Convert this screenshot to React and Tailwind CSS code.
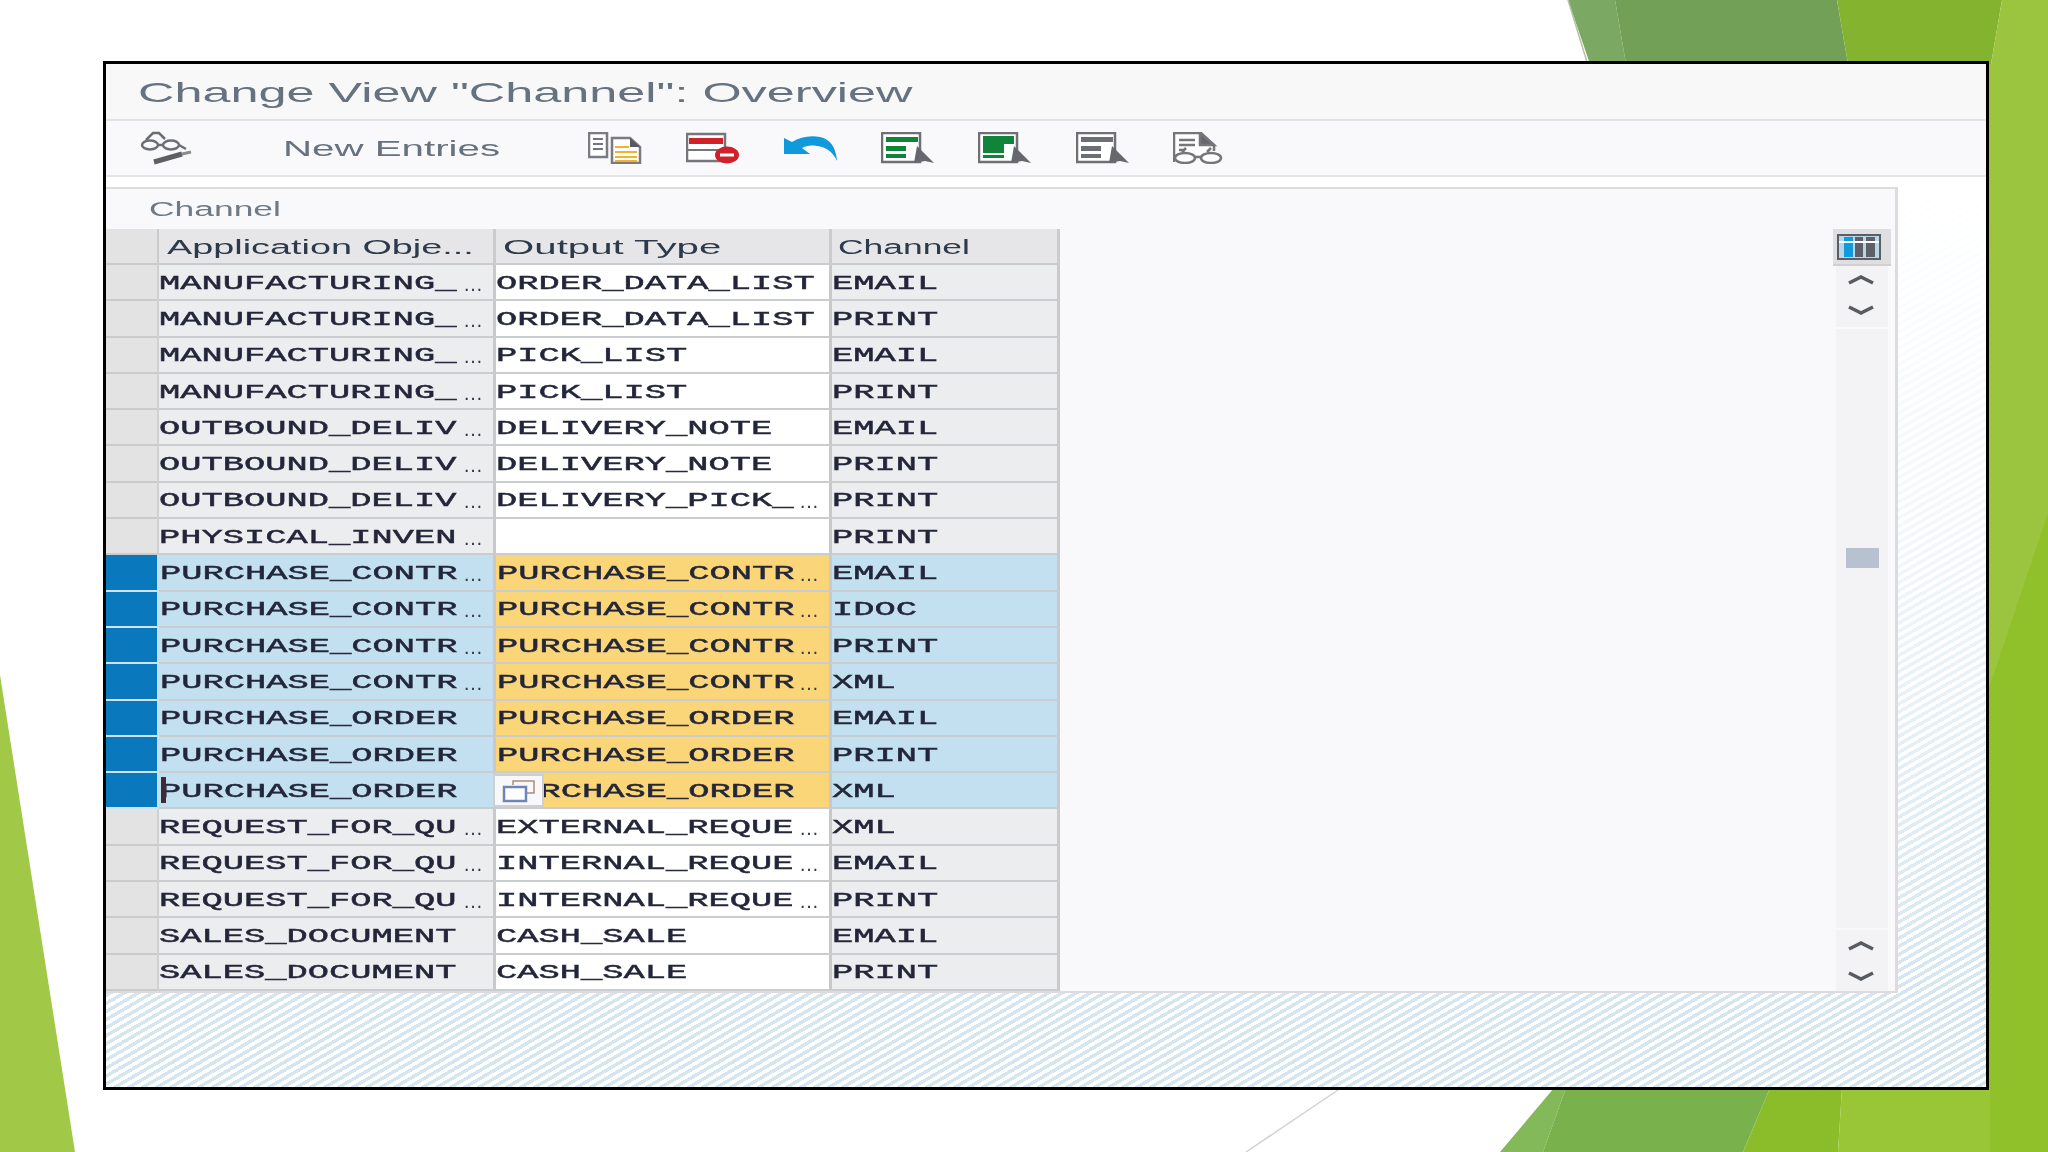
const rows = [
  ["MANUFACTURING_", true, "ORDER_DATA_LIST", false, "EMAIL"],
  ["MANUFACTURING_", true, "ORDER_DATA_LIST", false, "PRINT"],
  ["MANUFACTURING_", true, "PICK_LIST", false, "EMAIL"],
  ["MANUFACTURING_", true, "PICK_LIST", false, "PRINT"],
  ["OUTBOUND_DELIV", true, "DELIVERY_NOTE", false, "EMAIL"],
  ["OUTBOUND_DELIV", true, "DELIVERY_NOTE", false, "PRINT"],
  ["OUTBOUND_DELIV", true, "DELIVERY_PICK_", true, "PRINT"],
  ["PHYSICAL_INVEN", true, "", false, "PRINT"],
  ["PURCHASE_CONTR", true, "PURCHASE_CONTR", true, "EMAIL", "sel"],
  ["PURCHASE_CONTR", true, "PURCHASE_CONTR", true, "IDOC", "sel"],
  ["PURCHASE_CONTR", true, "PURCHASE_CONTR", true, "PRINT", "sel"],
  ["PURCHASE_CONTR", true, "PURCHASE_CONTR", true, "XML", "sel"],
  ["PURCHASE_ORDER", false, "PURCHASE_ORDER", false, "EMAIL", "sel"],
  ["PURCHASE_ORDER", false, "PURCHASE_ORDER", false, "PRINT", "sel"],
  ["PURCHASE_ORDER", false, "PURCHASE_ORDER", false, "XML", "focus"],
  ["REQUEST_FOR_QU", true, "EXTERNAL_REQUE", true, "XML"],
  ["REQUEST_FOR_QU", true, "INTERNAL_REQUE", true, "EMAIL"],
  ["REQUEST_FOR_QU", true, "INTERNAL_REQUE", true, "PRINT"],
  ["SALES_DOCUMENT", false, "CASH_SALE", false, "EMAIL"],
  ["SALES_DOCUMENT", false, "CASH_SALE", false, "PRINT"],
];

// The source screenshot is stretched sideways, so all text gets a horizontal scale
function Wide({ className = "scale-x-[1.77]", children }) {
  return (
    <span className={`inline-block origin-left whitespace-nowrap font-['Liberation_Sans',sans-serif] ${className}`}>
      {children}
    </span>
  );
}

function Background() {
  return (
    <svg className="absolute inset-0" width="2048" height="1152" viewBox="0 0 2048 1152">
      <polygon points="0,675 75,1152 0,1152" fill="#a2c848" />
      <polygon points="1568,0 1615,0 1626,64 1590,64" fill="#7ba862" />
      <polygon points="1615,0 1837,0 1848,64 1626,64" fill="#72a056" />
      <polygon points="1837,0 2002,0 1991,64 1848,64" fill="#84b42f" />
      <polygon points="2002,0 2048,0 2048,1152 1985,1152 1985,64 1991,64" fill="#9cc53f" />
      <polygon points="2048,513 1985,700 1985,1152 2048,1152" fill="#90c02a" />
      <polygon points="1554,1088 1566,1088 1543,1152 1500,1152" fill="#84b95a" />
      <polygon points="1566,1088 1770,1088 1743,1152 1543,1152" fill="#79b14c" />
      <polygon points="1770,1088 1842,1088 1838,1152 1743,1152" fill="#8bbd2a" />
      <polygon points="1842,1088 1990,1088 1990,1152 1838,1152" fill="#99c636" />
      <line x1="1568" y1="0" x2="1587" y2="62" stroke="#b5c2a8" strokeWidth="1.5" />
      <line x1="1338" y1="1090" x2="1246" y2="1152" stroke="#d2d2d2" strokeWidth="1.5" />
    </svg>
  );
}

function GlassesIcon() {
  return (
    <svg width="54" height="34" viewBox="0 0 54 34" fill="none" stroke="#6b6f75" strokeWidth="2.5">
      <ellipse cx="10" cy="14" rx="8" ry="4.5" />
      <ellipse cx="31" cy="14" rx="8" ry="4.5" />
      <path d="M18 14h5M6 9l7-7h6l6 6M39 14l7 4" />
      <path d="M14 31l28-8" stroke="#5c5f63" strokeWidth="5" />
      <path d="M42 23l9-2" stroke="#8a8d90" strokeWidth="3" />
    </svg>
  );
}

function CopyIcon() {
  return (
    <svg width="54" height="32" viewBox="0 0 54 32" fill="none">
      <path d="M1 1h18v24H1z" stroke="#7a7a80" strokeWidth="2.5" fill="#fff" />
      <path d="M5 7h10M5 12h10M5 17h10" stroke="#6f7480" strokeWidth="2" />
      <path d="M24 6h18l10 9v16H24z" stroke="#7a7a80" strokeWidth="2.5" fill="#fff" />
      <path d="M42 6l10 9H42z" fill="#55585e" />
      <path d="M27 15h14M27 20h22M27 25h22M27 29h22" stroke="#f2b32c" strokeWidth="2" />
    </svg>
  );
}

function DeleteIcon() {
  return (
    <svg width="54" height="32" viewBox="0 0 54 32" fill="none">
      <path d="M1 2h38v27H1z" stroke="#75757a" strokeWidth="2.5" fill="#fff" />
      <path d="M3 6h34v6H3z" fill="#d1202a" />
      <path d="M2 18h36" stroke="#75757a" strokeWidth="2" />
      <ellipse cx="41" cy="23" rx="12" ry="8.5" fill="#d1202a" />
      <path d="M34 23h14" stroke="#fff" strokeWidth="3" />
    </svg>
  );
}

function UndoIcon() {
  return (
    <svg width="54" height="32" viewBox="0 0 54 32" fill="none">
      <path d="M1 22V6l8 4c8-5 18-7 28-5 10 2 16 10 17 24-4-9-11-14-20-15-7-1-12 0-15 2l8 6z" fill="#0f9ade" />
    </svg>
  );
}

// Shared document-with-arrow icon, the fill differs between the buttons
function DocArrowIcon({ fill, solid }) {
  return (
    <svg width="54" height="32" viewBox="0 0 54 32" fill="none">
      <path d="M1 1h38v29H1z" stroke="#6f6f74" strokeWidth="2.5" fill="#fff" />
      {solid ? (
        <path d="M5 4h31v8H26v9H5zM5 23h21v3H5z" fill={fill} />
      ) : (
        <path d="M5 5h32v5H5zM5 14h20v5H5zM5 22h20v4H5z" fill={fill} />
      )}
      <path d="M33 31l3-17 17 17-9-2z" fill="#66686e" />
    </svg>
  );
}

function DisplayIcon() {
  return (
    <svg width="50" height="32" viewBox="0 0 50 32" fill="none" stroke="#75757a" strokeWidth="2.5">
      <path d="M1 30V1h27l13 12v6" fill="#fff" />
      <path d="M27 1l14 12H27z" fill="#66686e" />
      <path d="M6 8h16M6 13h16M6 18h6" />
      <ellipse cx="12" cy="26" rx="10" ry="5" fill="#fff" />
      <ellipse cx="38" cy="26" rx="10" ry="5" fill="#fff" />
      <path d="M22 25h6M9 20l4-4M34 20l4-4" />
    </svg>
  );
}

function SettingsIcon() {
  return (
    <svg width="44" height="26" viewBox="0 0 44 26" fill="none">
      <path d="M1 1h42v24H1z" fill="#b9d6e8" stroke="#5a5f66" strokeWidth="2" />
      <path d="M7 3h9v20H7z" fill="#0e9be0" />
      <path d="M18 3h8v20h-8zM29 3h9v20h-9z" fill="#5d6066" />
      <path d="M2 8h40" stroke="#fff" strokeWidth="2" />
    </svg>
  );
}

function Chevron({ up }) {
  return (
    <svg width="26" height="10" viewBox="0 0 26 10" fill="none" stroke="#585b60" strokeWidth="3.5">
      <path d={up ? "M1 8l8-4 4-2 4 2 8 4" : "M1 2l8 4 4 2 4-2 8-4"} />
    </svg>
  );
}

function PopupIcon() {
  return (
    <svg width="34" height="24" viewBox="0 0 34 24" fill="none">
      <path d="M11 6V2h21v12h-7" stroke="#a98f7c" strokeWidth="1.5" />
      <path d="M2 8h22v14H2z" stroke="#6f86b4" strokeWidth="2.5" fill="#fff" />
    </svg>
  );
}

function Cell({ text, dots, className = "" }) {
  return (
    <div className={`relative flex items-center overflow-hidden border-r-[3px] border-b-2 border-r-[#c9c9cb] border-b-[#c9cdd0] pt-[3px] ${className}`}>
      <span className="inline-block origin-left scale-x-[1.77] whitespace-nowrap font-['Liberation_Mono',monospace] text-[20px] text-[#23263a] [-webkit-text-stroke:0.45px_#23263a]">
        {text}
      </span>
      {dots && <span className="ml-auto mr-[10px] font-['Liberation_Sans',sans-serif] text-[20px] text-[#34384a]">…</span>}
    </div>
  );
}

function Row({ row }) {
  const [col1, dots1, col2, dots2, col3, state] = row;
  const active = state === "sel" || state === "focus";
  const focus = state === "focus";
  return (
    <div className="grid h-[36.3px] grid-cols-[53px_337px_336px_228px]">
      <div className={active ? "border-r-[2px] border-b-2 border-r-[#c3e0f0] border-b-[#cfe4f0] bg-[#0a78bd]" : "border-r-[2px] border-b-2 border-r-[#d0d0d2] border-b-[#cbcbcd] bg-[#e3e3e4]"} />
      <div className="relative grid">
        <Cell text={col1} dots={dots1} className={active ? "pl-px bg-[#c3e0f0]" : "bg-[#ecedef]"} />
        {focus && <div className="absolute left-[2px] top-[4px] h-[26px] w-[5px] bg-[#3d2a3c]" />}
      </div>
      <div className="relative grid">
        <Cell text={col2} dots={dots2} className={active ? "pl-px bg-[#fbd678]" : "bg-white"} />
        {focus && (
          <div className="absolute left-[-3px] top-[1px] flex h-[33px] w-[51px] items-center justify-center border-2 border-[#cfcfd1] bg-[#f8f8fa]">
            <PopupIcon />
          </div>
        )}
      </div>
      <Cell text={col3} className={active ? "bg-[#c3e0f0]" : "bg-[#ecedef]"} />
    </div>
  );
}

export default function App() {
  return (
    <div className="relative h-[1152px] w-[2048px] overflow-hidden bg-white pl-[103px] pt-[61px]">
      <Background />
      <div className="relative flex h-[1029px] w-[1886px] flex-col border-[3px] border-black bg-white blur-[0.4px]">
        <div className="flex h-[57px] shrink-0 items-center border-b-2 border-[#e2e2e4] bg-[#f8f8f8] pl-[32px] pt-[3px] text-[28px] text-[#66727f]">
          <Wide className="scale-x-[1.8]">Change View "Channel": Overview</Wide>
        </div>

        <div className="flex h-[56px] shrink-0 items-center border-b-2 border-[#e4e4e6] bg-[#f9f9fb] pl-[34px]">
          <GlassesIcon />
          <div className="ml-[89px] w-[216px] text-[22px] text-[#66727f]">
            <Wide className="scale-x-[1.83]">New Entries</Wide>
          </div>
          <div className="ml-[89px] flex gap-[43.5px]">
            <CopyIcon />
            <DeleteIcon />
            <UndoIcon />
            <DocArrowIcon fill="#10853a" />
            <DocArrowIcon fill="#10853a" solid />
            <DocArrowIcon fill="#6b6f75" />
            <DisplayIcon />
          </div>
        </div>

        <div className="flex-1 bg-[linear-gradient(to_bottom,#ffffff_0%,rgba(255,255,255,0.75)_35%,rgba(255,255,255,0)_90%),repeating-linear-gradient(150deg,#d5e6f1_0px,#d5e6f1_3.5px,#ffffff_3.5px,#ffffff_7px)] pt-[10px]">
          <div className="flex h-[806px] w-[1792px] border-t-2 border-r-[3px] border-b-2 border-[#dcdcde] bg-[#f9f8fa]">
            <div className="flex w-[954px] flex-col">
              <div className="flex h-[40px] items-center pl-[43px] text-[20px] text-[#6f7a85]">
                <Wide>Channel</Wide>
              </div>
              <div className="grid h-[36px] grid-cols-[53px_337px_336px_228px] text-[20px] text-[#2c3a4b]">
                <div className="border-r-[2px] border-b-2 border-[#cbcbcd] bg-[#e3e3e4]" />
                <div className="flex items-center border-r-[3px] border-b-2 border-[#cbcbcd] bg-[#e6e6e8] pl-[8px] pt-[2px]"><Wide className="scale-x-[1.89]">Application Obje...</Wide></div>
                <div className="flex items-center border-r-[3px] border-b-2 border-[#cbcbcd] bg-[#e6e6e8] pl-[7px] pt-[2px]"><Wide className="scale-x-[2.01]">Output Type</Wide></div>
                <div className="flex items-center border-r-[3px] border-b-2 border-[#cbcbcd] bg-[#e6e6e8] pl-[6px] pt-[2px]"><Wide>Channel</Wide></div>
              </div>
              {rows.map((row, i) => (
                <Row key={i} row={row} />
              ))}
            </div>

            <div className="ml-auto mr-[7px] mt-[40px] flex w-[52px] flex-col">
              <div className="-mx-[3px] flex h-[37px] shrink-0 items-center justify-center border-b-2 border-[#d0d0d2] bg-[#dfdfe1] pr-[6px]">
                <SettingsIcon />
              </div>
              <div className="mb-[2px] flex h-[61px] shrink-0 flex-col bg-[#f3f2f4]">
                <div className="flex h-[31px] items-center justify-center pb-1 pr-[2px]"><Chevron up /></div>
                <div className="flex h-[30px] items-center justify-center pb-1 pr-[2px]"><Chevron /></div>
              </div>
              <div className="flex-1 bg-[#f3f2f4] pl-[10px] pt-[219px]">
                <div className="h-[20px] w-[33px] bg-[#b7c1cf]" />
              </div>
              <div className="mt-[2px] flex h-[61px] shrink-0 flex-col bg-[#f3f2f4]">
                <div className="flex h-[31px] items-center justify-center pr-[2px]"><Chevron up /></div>
                <div className="flex h-[30px] items-center justify-center pr-[2px]"><Chevron /></div>
              </div>
            </div>
          </div>
        </div>
      </div>
    </div>
  );
}
